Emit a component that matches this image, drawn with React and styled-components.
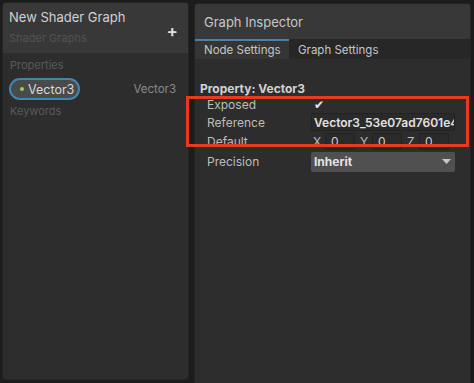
import React from "react";
import styled, { createGlobalStyle } from "styled-components";

const Global = createGlobalStyle`
  html, body { margin: 0; padding: 0; background: #1c1c1c; }
  body { font-family: Inter, "Noto Sans", "Liberation Sans", sans-serif; }
  * { box-sizing: border-box; }
`;

const Page = styled.div`
  width: 474px;
  height: 383px;
  display: flex;
  gap: 5px;
  padding: 2px 3px 0 2px;
  overflow: hidden;
  position: relative;
  background: #1c1c1c;
`;

const Blackboard = styled.div`
  width: 187px;
  height: 378px;
  background: #2d2d2d;
  border-radius: 4px;
  border: 1px solid #242424;
  display: flex;
  flex-direction: column;
  overflow: hidden;
`;

const BoardHeader = styled.div`
  height: 50px;
  background: #383838;
  display: flex;
  align-items: center;
  justify-content: space-between;
  padding: 0 10px 0 6px;
`;

const HeaderTexts = styled.div`
  display: flex;
  flex-direction: column;
  gap: 7px;
  margin-top: -2px;
`;

const Title = styled.div`
  font-size: 13px;
  color: #d2d2d2;
  line-height: 16px;
`;

const Subtitle = styled.div`
  font-size: 11px;
  color: #525252;
  line-height: 13px;
`;

const Plus = styled.div`
  font-size: 17px;
  color: #e0e0e0;
  line-height: 16px;
  font-weight: 600;
  margin-top: 6px;
`;

const Section = styled.div`
  font-size: 11px;
  color: #5a5a5a;
  padding: ${(p) => (p.$first ? "5px" : "0")} 0 0 7px;
  line-height: 14px;
`;

const PropRow = styled.div`
  display: flex;
  align-items: center;
  justify-content: space-between;
  padding: 0 12px 0 6px;
  margin: 6px 0 4px;
`;

const Pill = styled.div`
  height: 22px;
  width: 71px;
  border: 2px solid #3f87b4;
  border-radius: 11px;
  background: #4a4a4a;
  display: flex;
  align-items: center;
  gap: 4px;
  padding-left: 9px;
  font-size: 12.5px;
  color: #d8d8d8;
`;

const Dot = styled.span`
  width: 4px;
  height: 4px;
  border-radius: 50%;
  background: #93d150;
`;

const TypeLabel = styled.div`
  font-size: 11.5px;
  color: #8a8a8a;
`;

const Inspector = styled.div`
  flex: 1;
  margin-top: 1px;
  background: #2d2d2d;
  border-radius: 4px 4px 0 0;
  border: 1px solid #242424;
  border-bottom: none;
  display: flex;
  flex-direction: column;
  overflow: hidden;
`;

const InspectorHeader = styled.div`
  height: 35px;
  background: #383838;
  display: flex;
  align-items: center;
  padding-left: 9px;
  font-size: 13px;
  color: #c8c8c8;
`;

const TabBar = styled.div`
  height: 20px;
  background: #272727;
  display: flex;
`;

const Tab = styled.div`
  height: 20px;
  padding: 0 9px;
  width: ${(p) => (p.$active ? "94px" : "auto")};
  display: flex;
  align-items: center;
  white-space: nowrap;
  font-size: 11.5px;
  color: #c6c6c6;
  background: ${(p) => (p.$active ? "#353535" : "transparent")};
  border-top: 2px solid ${(p) => (p.$active ? "#4b80ae" : "transparent")};
`;

const Content = styled.div`
  padding: 22px 0 0 5px;
  display: flex;
  flex-direction: column;
`;

const PropTitle = styled.div`
  font-size: 12px;
  font-weight: 700;
  color: #d2d2d2;
  line-height: 15px;
`;

const Row = styled.div`
  display: grid;
  grid-template-columns: 104px 1fr;
  align-items: center;
  height: ${(p) => p.$h || 19}px;
  padding-left: 7px;
  padding-right: 15px;
`;

const Label = styled.div`
  font-size: 12px;
  color: #bdbdbd;
`;

const Check = styled.div`
  font-size: 12px;
  color: #e8e8e8;
  padding-left: 3px;
`;

const TextField = styled.div`
  height: 18px;
  background: #2a2a2a;
  border: 1px solid #222;
  border-radius: 2px;
  font-size: 12px;
  font-weight: 600;
  color: #e2e2e2;
  display: flex;
  align-items: center;
  padding-left: 2px;
  white-space: nowrap;
  overflow: hidden;
`;

const Vec = styled.div`
  display: flex;
  align-items: center;
  gap: 3px;
`;

const Axis = styled.span`
  font-size: 12px;
  color: #bdbdbd;
  width: 11px;
  padding-left: 2px;
`;

const NumField = styled.div`
  width: 30px;
  height: 17px;
  background: #2a2a2a;
  border: 1px solid #222;
  border-radius: 2px;
  font-size: 12px;
  color: #d0d0d0;
  padding-left: 5px;
  display: flex;
  align-items: center;
`;

const Dropdown = styled.div`
  height: 20px;
  background: #505050;
  border-radius: 2px;
  display: flex;
  align-items: center;
  justify-content: space-between;
  padding: 0 4px 0 3px;
  font-size: 12px;
  font-weight: 700;
  color: #e4e4e4;
`;

const Highlight = styled.div`
  position: absolute;
  left: 186px;
  top: 96px;
  width: 283px;
  height: 51px;
  border: 3px solid #ea3a1d;
  pointer-events: none;
`;

export default function App() {
  return (
    <>
      <Global />
      <Page>
        <Blackboard>
          <BoardHeader>
            <HeaderTexts>
              <Title>New Shader Graph</Title>
              <Subtitle>Shader Graphs</Subtitle>
            </HeaderTexts>
            <Plus>+</Plus>
          </BoardHeader>
          <Section $first>Properties</Section>
          <PropRow>
            <Pill>
              <Dot />
              Vector3
            </Pill>
            <TypeLabel>Vector3</TypeLabel>
          </PropRow>
          <Section>Keywords</Section>
        </Blackboard>
        <Inspector>
          <InspectorHeader>Graph Inspector</InspectorHeader>
          <TabBar>
            <Tab $active>Node Settings</Tab>
            <Tab>Graph Settings</Tab>
          </TabBar>
          <Content>
            <PropTitle>Property: Vector3</PropTitle>
            <Row $h={16}>
              <Label>Exposed</Label>
              <Check>✔</Check>
            </Row>
            <Row $h={20}>
              <Label>Reference</Label>
              <TextField>Vector3_53e07ad7601e4a1f9</TextField>
            </Row>
            <Row $h={19}>
              <Label>Default</Label>
              <Vec>
                <Axis>X</Axis>
                <NumField>0</NumField>
                <Axis>Y</Axis>
                <NumField>0</NumField>
                <Axis>Z</Axis>
                <NumField>0</NumField>
              </Vec>
            </Row>
            <Row $h={21}>
              <Label>Precision</Label>
              <Dropdown>
                Inherit
                <svg width="9" height="6" viewBox="0 0 9 6">
                  <path d="M0 0 L9 0 L4.5 5 Z" fill="#c8c8c8" />
                </svg>
              </Dropdown>
            </Row>
          </Content>
        </Inspector>
        <Highlight />
      </Page>
    </>
  );
}
